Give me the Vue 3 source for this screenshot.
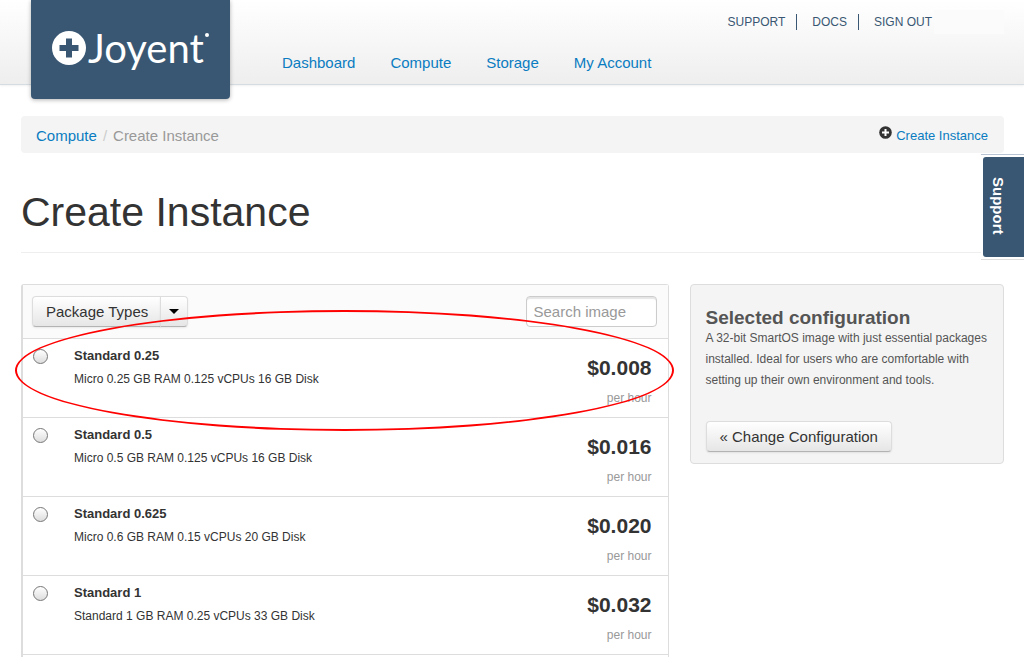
<script setup>
import { ref } from 'vue'

const search = ref('')
const selected = ref(null)

const navLinks = ['Dashboard', 'Compute', 'Storage', 'My Account']
const userLinks = ['SUPPORT', 'DOCS', 'SIGN OUT']

const packages = [
  { id: 'std-025', name: 'Standard 0.25', specs: 'Micro 0.25 GB RAM 0.125 vCPUs 16 GB Disk', price: '$0.008' },
  { id: 'std-05', name: 'Standard 0.5', specs: 'Micro 0.5 GB RAM 0.125 vCPUs 16 GB Disk', price: '$0.016' },
  { id: 'std-0625', name: 'Standard 0.625', specs: 'Micro 0.6 GB RAM 0.15 vCPUs 20 GB Disk', price: '$0.020' },
  { id: 'std-1', name: 'Standard 1', specs: 'Standard 1 GB RAM 0.25 vCPUs 33 GB Disk', price: '$0.032' }
]
</script>

<template>
  <div class="page">
    <header class="topbar">
      <a class="logo" href="#">
        <svg class="logo-mark" viewBox="0 0 34 34" aria-hidden="true">
          <circle cx="17" cy="17" r="17" fill="#fff" />
          <path d="M14 7.500h6V14h6.500v6H20v6.500h-6V20H7.500v-6H14z" fill="#395773" />
        </svg>
        <span class="logo-text">Joyent</span>
        <svg class="logo-dot" viewBox="0 0 4 4" aria-hidden="true">
          <circle cx="2" cy="2" r="2" fill="#fff" />
        </svg>
      </a>

      <nav class="main-nav">
        <a v-for="link in navLinks" :key="link" href="#">{{ link }}</a>
      </nav>

      <div class="user-nav">
        <a v-for="link in userLinks" :key="link" href="#">{{ link }}</a>
        <span class="user-name"></span>
      </div>
    </header>

    <main class="container">
      <div class="breadcrumb">
        <nav class="crumbs">
          <a href="#">Compute</a>
          <span class="divider">/</span>
          <span class="current">Create Instance</span>
        </nav>
        <a class="create-link" href="#">
          <svg class="plus-icon" viewBox="0 0 13 13" aria-hidden="true">
            <circle cx="6.500" cy="6.500" r="6.300" fill="#333" />
            <path d="M5.500 3h2v2.500H10v2H7.500V10h-2V7.500H3v-2h2.500z" fill="#fff" />
          </svg>
          <span>Create Instance</span>
        </a>
      </div>

      <h1 class="page-title">Create Instance</h1>

      <div class="columns">
        <section class="packages">
          <div class="toolbar">
            <div class="btn-group">
              <button type="button" class="btn">Package Types</button>
              <button type="button" class="btn btn-caret" aria-label="Package Types">
                <span class="caret"></span>
              </button>
            </div>
            <input v-model="search" class="search" type="text" placeholder="Search image" aria-label="Search image" />
          </div>

          <ul class="package-list">
            <li v-for="pkg in packages" :key="pkg.id" class="package">
              <input :id="pkg.id" v-model="selected" class="radio" type="radio" name="package" :value="pkg.id" />
              <label class="info" :for="pkg.id">
                <strong class="name">{{ pkg.name }}</strong>
                <span class="specs">{{ pkg.specs }}</span>
              </label>
              <div class="cost">
                <strong class="price">{{ pkg.price }}</strong>
                <span class="unit">per hour</span>
              </div>
            </li>
          </ul>

          <div class="marker"></div>
        </section>

        <aside class="config">
          <h2>Selected configuration</h2>
          <p>A 32-bit SmartOS image with just essential packages installed. Ideal for users who are comfortable with setting up their own environment and tools.</p>
          <button type="button" class="btn">« Change Configuration</button>
        </aside>
      </div>
    </main>

    <a class="support-tab" href="#"><span>Support</span></a>
  </div>
</template>

<style>
body {
  margin: 0;
  background: #fff;
  overflow-x: hidden;
}
</style>

<style scoped>
.page {
  font-family: 'Liberation Sans', Arial, sans-serif;
  font-size: 15px;
  line-height: 20px;
  color: #333;
}

.page *,
.page {
  box-sizing: border-box;
}

a {
  color: #0a7cc1;
  text-decoration: none;
}

.topbar {
  display: flex;
  align-items: flex-start;
  height: 85px;
  padding: 0 20px 0 31px;
  background: linear-gradient(#fff, #eee);
  border-bottom: 1px solid #d5dde3;
  box-shadow: 0 1px 2px rgba(0, 0, 0, 0.06);
}

.logo {
  display: flex;
  flex: none;
  width: 199px;
  height: 99px;
  padding: 31px 0 0 21px;
  background: #395773;
  border-radius: 0 0 4px 4px;
  box-shadow: 0 1px 4px rgba(0, 0, 0, 0.3);
}

.logo-mark {
  width: 34px;
  height: 34px;
}

.logo-text {
  margin-left: 2px;
  font-family: Lato, sans-serif;
  font-size: 40px;
  line-height: 34px;
  color: #fff;
}

.logo-dot {
  width: 4px;
  height: 4px;
  margin: 2px 0 0 1px;
}

.main-nav {
  display: flex;
  gap: 35px;
  padding: 53px 0 0 52px;
}

.user-nav {
  display: flex;
  align-items: center;
  margin-left: auto;
  padding-top: 10px;
  font-size: 12px;
}

.user-nav a {
  padding-left: 15px;
  line-height: 16px;
  color: #395773;
}

.user-nav a + a {
  margin-left: 11px;
  border-left: 1px solid #395773;
}

.user-name {
  width: 70px;
  height: 24px;
  margin-left: 2px;
  background: #fbfbfb;
}

.container {
  padding: 31px 20px 0 21px;
}

.breadcrumb {
  display: flex;
  align-items: center;
  justify-content: space-between;
  height: 37px;
  padding: 2px 16px 0 15px;
  background: #f4f4f4;
  border-radius: 4px;
}

.crumbs {
  display: flex;
  gap: 6px;
}

.divider {
  color: #ccc;
}

.current {
  color: #999;
}

.create-link {
  display: flex;
  gap: 4px;
  font-size: 13px;
}

.plus-icon {
  width: 13px;
  height: 13px;
}

.page-title {
  margin: 0 0 31px;
  padding: 39px 0 19px;
  font-size: 41px;
  font-weight: 400;
  line-height: 41px;
  border-bottom: 1px solid #eee;
}

.columns {
  display: grid;
  grid-template-columns: minmax(0, 35fr) minmax(0, 17fr);
  gap: 21px;
  align-items: start;
}

.packages {
  position: relative;
  padding-bottom: 4px;
  border: 1px solid #ddd;
  border-left-width: 2px;
  border-bottom: 0;
  border-radius: 3px 3px 0 0;
}

.toolbar {
  display: flex;
  align-items: center;
  justify-content: space-between;
  height: 54px;
  padding: 0 11px 0 9px;
  background: #fbfbfb;
  border-bottom: 1px solid #ddd;
}

.btn-group {
  display: flex;
}

.btn {
  height: 31px;
  padding: 0 13px;
  font-family: inherit;
  font-size: 15px;
  line-height: 20px;
  color: #333;
  background: linear-gradient(#fff, #e6e6e6);
  border: 1px solid #ddd;
  border-bottom-color: #b3b3b3;
  border-radius: 4px;
  box-shadow: 0 1px 2px rgba(0, 0, 0, 0.08);
  cursor: pointer;
}

.btn-group .btn:first-child {
  padding-right: 12px;
  border-radius: 4px 0 0 4px;
}

.btn-group .btn-caret {
  margin-left: -1px;
  padding: 0 8px;
  border-radius: 0 4px 4px 0;
}

.caret {
  display: block;
  border: 5px solid transparent;
  border-top-color: #000;
  border-bottom: 0;
}

.search {
  width: 131px;
  height: 31px;
  padding: 0 7px;
  font-family: inherit;
  font-size: 15px;
  color: #555;
  background: #fff;
  border: 1px solid #ccc;
  border-radius: 4px;
  box-shadow: inset 0 2px 1px rgba(0, 0, 0, 0.1);
}

.search::placeholder {
  color: #999;
  opacity: 1;
}

.package-list {
  margin: 0;
  padding: 0;
  list-style: none;
}

.package {
  display: flex;
  align-items: flex-start;
  min-height: 79px;
  padding: 6px 16px 0 10px;
  border-bottom: 1px solid #ddd;
}

.radio {
  appearance: none;
  flex: none;
  width: 15px;
  height: 15px;
  margin: 4px 26px 0 0;
  background: linear-gradient(#fff, #ddd);
  border: 1px solid #777;
  border-radius: 50%;
}

.radio:checked {
  background: radial-gradient(circle, #333 0 3px, #eee 4px);
}

.info {
  flex: 1;
}

.name,
.specs {
  display: block;
}

.name {
  font-size: 13px;
  line-height: 22px;
}

.specs {
  font-size: 12px;
  line-height: 24px;
}

.cost {
  padding-top: 10px;
  text-align: right;
}

.price,
.unit {
  display: block;
}

.price {
  font-size: 21px;
  line-height: 26px;
}

.unit {
  font-size: 12px;
  line-height: 34px;
  color: #999;
}

/* ring around the first package */
.marker {
  position: absolute;
  top: 25px;
  left: -8px;
  right: -6px;
  height: 121px;
  border: 2px solid #f00;
  border-radius: 50%;
  pointer-events: none;
}

.config {
  padding: 22px 15px 11px;
  background: #f4f4f4;
  border: 1px solid #ddd;
  border-radius: 4px;
}

.config h2 {
  margin: 0;
  font-size: 19px;
  line-height: 21px;
  color: #555;
}

.config p {
  margin: 0 0 30px;
  font-size: 12px;
  line-height: 21px;
  color: #555;
}

.support-tab {
  position: fixed;
  top: 154px;
  right: 0;
  padding: 2px 0 2px 2px;
  font-weight: 700;
  background: #fff;
  border-top: 1px solid #b8c4d4;
  border-bottom: 1px solid #ddd;
}

.support-tab span {
  display: block;
  width: 41px;
  height: 100px;
  padding: 20px 0 0 5px;
  writing-mode: vertical-lr;
  color: #fff;
  background: #395773;
  border-radius: 3px 0 0 3px;
}
</style>
